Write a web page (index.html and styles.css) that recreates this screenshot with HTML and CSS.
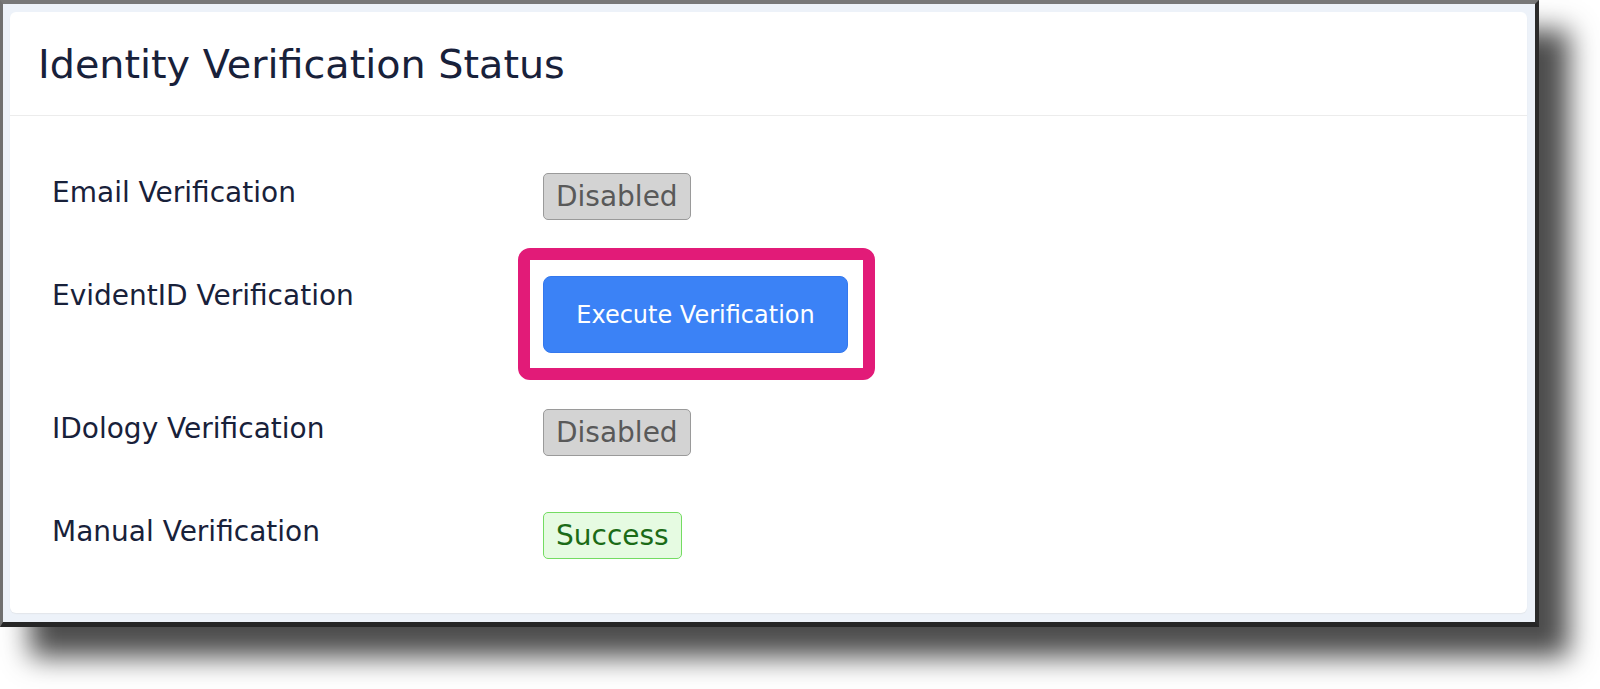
FILE: index.html
```html
<!DOCTYPE html>
<html>
<head>
<link rel="stylesheet" href="styles.css">
</head>
<body>

<div class="page">
  <div class="frame">
    <div class="card">
      <div class="card-header">
        <h2 class="card-title">Identity Verification Status</h2>
      </div>
      <div class="card-body">
        <div class="status-row">
          <div class="status-label">Email Verification</div>
          <div class="status-value">
            <span class="badge badge-disabled">Disabled</span>
          </div>
        </div>
        <div class="status-row">
          <div class="status-label">EvidentID Verification</div>
          <div class="status-value">
            <div class="highlight">
              <button class="execute-button">Execute Verification</button>
            </div>
          </div>
        </div>
        <div class="status-row">
          <div class="status-label">IDology Verification</div>
          <div class="status-value">
            <span class="badge badge-disabled">Disabled</span>
          </div>
        </div>
        <div class="status-row">
          <div class="status-label">Manual Verification</div>
          <div class="status-value">
            <span class="badge badge-success">Success</span>
          </div>
        </div>
      </div>
    </div>
  </div>
</div>

</body>
</html>
```

FILE: styles.css
```css
body {
  background-color: white;
  font-family: "DejaVu Sans", Inter, sans-serif;
  margin: 0;
}

.page {
  min-height: 689px;
}

.frame {
  background-color: #edf2f9;
  border-bottom: 5px solid #262626;
  border-left: 3px solid #707070;
  border-right: 4px solid #2b2b2b;
  border-top: 4px solid #787878;
  box-shadow: 30px 30px 26px rgba(0, 0, 0, 0.7);
  box-sizing: border-box;
  height: 627px;
  padding: 8px 8px 9px 7px;
  width: 1539px;
}

.card {
  background-color: white;
  border-radius: 6px;
  box-shadow: 0 1px 1px rgba(120, 100, 80, 0.08);
  height: 100%;
}

.card-header {
  align-items: center;
  border-bottom: 1px solid #ececec;
  display: flex;
  height: 103px;
  padding-left: 28px;
}

.card-title {
  color: #18213a;
  font-size: 39.7px;
  font-weight: 400;
  margin: 0;
}

.card-body {
  display: flex;
  flex-direction: column;
  gap: 56px;
  padding: 57px 0 0 42px;
}

.status-row {
  align-items: flex-start;
  display: flex;
}

.status-label {
  color: #18213a;
  font-size: 28px;
  line-height: 30px;
  padding-top: 5px;
  width: 491px;
}

.badge {
  border: 1px solid;
  border-radius: 5px;
  display: inline-block;
  font-size: 28px;
  line-height: 45px;
  padding: 0 12px;
}

.badge-disabled {
  background-color: #d3d3d3;
  border-color: #9a9a9a;
  color: #595959;
}

.badge-success {
  background-color: #e6fbe2;
  border-color: #74dc62;
  color: #1b6b17;
}

.highlight {
  display: inline-block;
  position: relative;
}

/* annotation box drawn round the button */
.highlight::after {
  border: 12px solid #e21b78;
  border-radius: 12px;
  bottom: -27px;
  content: "";
  left: -25px;
  position: absolute;
  right: -27px;
  top: -28px;
}

.execute-button {
  background-color: #3b82f6;
  border: 1px solid #3478ee;
  border-radius: 8px;
  color: white;
  display: block;
  font-family: inherit;
  font-size: 24px;
  height: 77px;
  width: 305px;
}
```
